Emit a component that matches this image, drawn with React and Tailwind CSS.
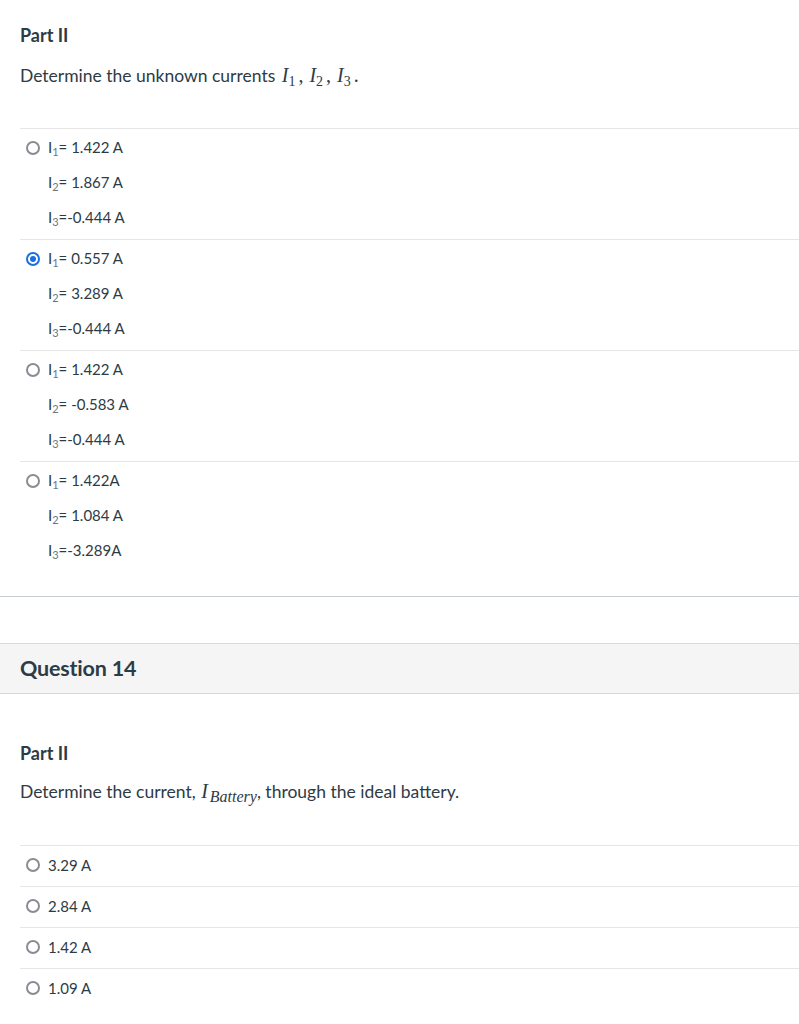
import React from 'react'

const font = { fontFamily: 'Lato, "Noto Sans", sans-serif' }
const mathFont = "font-['Liberation_Serif',serif] italic"

const Radio = ({ checked }) =>
    checked ? (
        <span className="w-[14px] h-[14px] rounded-full border-[2px] border-[#1a6fe0] flex items-center justify-center shrink-0">
            <span className="w-[6px] h-[6px] rounded-full bg-[#1a6fe0]" />
        </span>
    ) : (
        <span className="w-[14px] h-[14px] rounded-full border-[2px] border-[#8b8b95] shrink-0" />
    )

const Cur = ({ n, value }) => (
    <span className="whitespace-pre">
        I<span className="relative top-[3px] text-[11px] text-[#6b7780]">{n}</span>={value}
    </span>
)

const MultiOption = ({ lines, checked }) => (
    <div className="border-t border-[#e6e6e6] pt-[1px] pb-[4px]">
        {lines.map((l, i) => (
            <div key={i} className="h-[35px] flex items-center gap-[8px] pl-[6px]">
                {i === 0 ? <Radio checked={checked} /> : <span className="w-[14px] shrink-0" />}
                <Cur n={i + 1} value={l} />
            </div>
        ))}
    </div>
)

const SimpleOption = ({ label }) => (
    <div className="border-t border-[#e6e6e6] h-[41px] flex items-center gap-[8px] pl-[6px] pb-[2px]">
        <Radio />
        <span>{label}</span>
    </div>
)

const Sub = ({ children }) => (
    <span className="relative top-[4px] text-[14px] not-italic">{children}</span>
)

export default function App() {
    const options = [
        { lines: [' 1.422 A', ' 1.867 A', '-0.444 A'] },
        { lines: [' 0.557 A', ' 3.289 A', '-0.444 A'], checked: true },
        { lines: [' 1.422 A', ' -0.583 A', '-0.444 A'] },
        { lines: [' 1.422A', ' 1.084 A', '-3.289A'] },
    ]
    return (
        <div className="bg-white w-[799px] min-h-[1024px] text-[#2d3b45] overflow-hidden" style={font}>
            <div className="pl-[20px]">
                <div className="pt-[23px] text-[18px] leading-[24px] font-bold">Part II</div>
                <div className="mt-[14px] text-[17.5px] leading-[28px]">
                    Determine the unknown currents{' '}
                    <span className={mathFont + ' text-[20px] ml-[2px]'}>
                        I<Sub>1</Sub>
                        <span className="not-italic ml-[3px] mr-[6px]">,</span>I<Sub>2</Sub>
                        <span className="not-italic ml-[3px] mr-[6px]">,</span>I<Sub>3</Sub>
                        <span className="not-italic ml-[3px]">.</span>
                    </span>
                </div>
                <div className="mt-[36px] text-[15px]">
                    {options.map((o, i) => (
                        <MultiOption key={i} lines={o.lines} checked={o.checked} />
                    ))}
                </div>
            </div>

            <div className="mt-[24px] border-t border-[#c7cdd1]" />

            <div className="mt-[46px] bg-[#f5f5f5] border-y border-[#d9d9d9] h-[51px] flex items-center pl-[20px]">
                <span className="text-[21.5px] font-bold tracking-[-0.2px]">Question 14</span>
            </div>

            <div className="pl-[20px]">
                <div className="mt-[47px] text-[18px] leading-[24px] font-bold">Part II</div>
                <div className="mt-[12px] text-[17.5px] leading-[28px]">
                    Determine the current,{' '}
                    <span className={mathFont + ' text-[20px] ml-[1px]'}>
                        I<span className="relative top-[4px] text-[16px] ml-[2px]">Battery</span>
                    </span>
                    , through the ideal battery.
                </div>
                <div className="mt-[38px] text-[15px]">
                    <SimpleOption label="3.29 A" />
                    <SimpleOption label="2.84 A" />
                    <SimpleOption label="1.42 A" />
                    <SimpleOption label="1.09 A" />
                </div>
            </div>
        </div>
    )
}
